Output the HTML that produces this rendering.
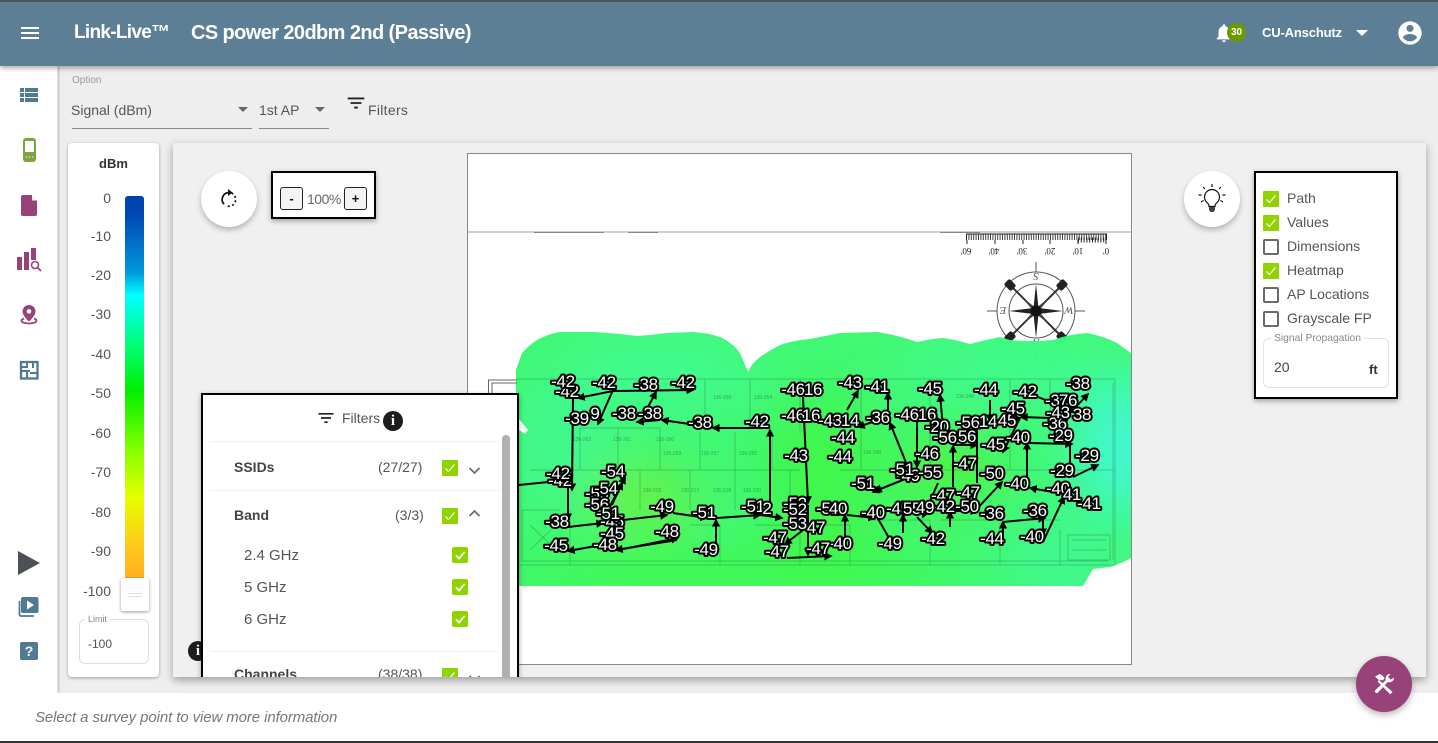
<!DOCTYPE html>
<html lang="en"><head><meta charset="utf-8"><title>Link-Live</title>
<style>
*{box-sizing:border-box}
html,body{margin:0;padding:0;width:1438px;height:743px;overflow:hidden;background:#eee;font-family:"Liberation Sans",sans-serif;color:#555}
.a{position:absolute}
#hdr{left:0;top:0;width:1438px;height:66px;background:#5d7f96;border-top:2px solid #4a5560;box-shadow:0 2px 5px rgba(0,0,0,.35);z-index:5;color:#fff}
#side{left:0;top:66px;width:58px;height:627px;background:#fff;border-right:1px solid #ddd;box-shadow:1px 0 2px rgba(0,0,0,.2)}
#bot{left:0;top:693px;width:1438px;height:50px;background:#fff;border-bottom:2px solid #3a3430;z-index:3}
#bot span{position:absolute;left:35px;top:16px;font-style:italic;font-size:15px;line-height:18px;letter-spacing:-.1px;color:#777}
#main{left:173px;top:143px;width:1253px;height:534px;background:#f0f0f0;box-shadow:0 3px 8px rgba(0,0,0,.35);overflow:hidden;z-index:1}
#leg{left:68px;top:143px;width:91px;height:534px;background:#fff;border-radius:4px;box-shadow:0 1px 3px rgba(0,0,0,.35)}
.n{position:absolute;right:48px;font-size:14px;line-height:16px;color:#555;width:40px;text-align:right}
.ck{position:absolute;width:16px;height:16px;background:#8fd400;border-radius:1px}
.ck svg{position:absolute;left:0;top:0}
.un{position:absolute;width:16px;height:16px;border:2px solid #6a6a6a;border-radius:2px;background:#fff}
.lb{position:absolute;font-size:14px;line-height:16px;color:#555;white-space:nowrap}
.b{font-weight:bold;color:#444}
.cir{position:absolute;width:56px;height:56px;border-radius:50%;background:#fff;box-shadow:0 3px 6px rgba(0,0,0,.25)}
.box{position:absolute;background:#fff;border:2px solid #000;box-shadow:0 2px 5px rgba(0,0,0,.35)}
.btn{position:absolute;width:23px;height:23px;border:1px solid #222;border-radius:3px;background:#f4f4f4;text-align:center;font-size:13px;line-height:21px;font-weight:bold;color:#111}
.sep{position:absolute;left:7px;width:290px;height:1px;background:#f0f0f0}
.inf{position:absolute;width:20px;height:20px;border-radius:50%;background:#1c1c1c;color:#fff;text-align:center;font:bold 15px/20px "Liberation Serif",serif}
</style></head><body>

<div class="a" id="hdr">
 <svg class="a" style="left:18px;top:19px" width="24" height="24" viewBox="0 0 24 24"><path fill="#fff" d="M3 18h18v-2H3v2zm0-5h18v-2H3v2zm0-7v2h18V6H3z"/></svg>
 <div class="a" style="left:74px;top:19px;font-size:19px;line-height:24px;font-weight:bold;letter-spacing:-.7px;white-space:nowrap">Link-Live™</div>
 <div class="a" style="left:191px;top:19px;font-size:20px;line-height:24px;font-weight:bold;letter-spacing:-.6px;white-space:nowrap">CS power 20dbm 2nd (Passive)</div>
 <svg class="a" style="left:1213px;top:20px" width="22" height="22" viewBox="0 0 24 24"><path fill="#fff" d="M12 22c1.1 0 2-.9 2-2h-4c0 1.1.89 2 2 2zm6-6v-5c0-3.07-1.64-5.64-4.5-6.32V4c0-.83-.67-1.5-1.5-1.5s-1.5.67-1.5 1.5v.68C7.63 5.36 6 7.92 6 11v5l-2 2v1h16v-1l-2-2z"/></svg>
 <div class="a" style="left:1227px;top:21px;width:19px;height:19px;border-radius:50%;background:#6a9a00;color:#fff;font:bold 10px/19px 'Liberation Sans',sans-serif;text-align:center">30</div>
 <div class="a" style="left:1262px;top:23px;font-size:13px;line-height:16px;font-weight:bold;letter-spacing:-.15px;white-space:nowrap">CU-Anschutz</div>
 <svg class="a" style="left:1356px;top:28px" width="12" height="7"><path fill="#fff" d="M0 0h12L6 6z"/></svg>
 <svg class="a" style="left:1396px;top:17px" width="28" height="28" viewBox="0 0 24 24"><path fill="#fff" d="M12 2C6.48 2 2 6.48 2 12s4.48 10 10 10 10-4.48 10-10S17.52 2 12 2zm0 3c1.66 0 3 1.34 3 3s-1.34 3-3 3-3-1.34-3-3 1.34-3 3-3zm0 14.2c-2.5 0-4.71-1.28-6-3.22.03-1.99 4-3.08 6-3.08 1.99 0 5.97 1.09 6 3.08-1.29 1.94-3.5 3.22-6 3.22z"/></svg>
</div>

<div class="a" id="side">
 <svg class="a" style="left:0;top:0" width="58" height="627" viewBox="0 66 58 627">
  <g fill="#4f7a94">
   <path d="M20 88h4v4h-4zM25 88H38v4H25zM20 93h4v4h-4zM25 93H38v4H25zM20 98h4v4h-4zM25 98H38v4H25z"/>
  </g>
  <rect x="23" y="138" width="13" height="24" rx="3" fill="#7aa63f"/>
  <rect x="25" y="141" width="9" height="11" fill="#fff"/>
  <g fill="#d9e6c5"><circle cx="26.500" cy="157" r=".8"/><circle cx="29.500" cy="157" r=".8"/><circle cx="32.500" cy="157" r=".8"/></g>
  <path fill="#97437a" d="M23 195h8.500l5.500 6v13a2 2 0 0 1-2 2H23a2 2 0 0 1-2-2v-17a2 2 0 0 1 2-2z"/>
  <path fill="#fff" d="M32 195.500v5h5z" opacity=".9"/>
  <g fill="#97437a"><rect x="17" y="257" width="5" height="13"/><rect x="24" y="252" width="5" height="18"/><rect x="31" y="248" width="5" height="12"/></g>
  <circle cx="35" cy="265" r="3.500" fill="#fff" stroke="#97437a" stroke-width="1.600"/><path d="M37.500 267.500l3.500 3.500" stroke="#97437a" stroke-width="1.800"/>
  <path fill="#97437a" d="M29 305c-3.600 0-6.500 2.900-6.500 6.500 0 4.400 6.500 10 6.500 10s6.500-5.600 6.500-10c0-3.600-2.900-6.500-6.500-6.500zm0 8.700a2.300 2.300 0 1 1 0-4.600 2.300 2.300 0 0 1 0 4.600z"/>
  <path fill="none" stroke="#97437a" stroke-width="1.800" d="M24 318.500c-2 .7-2.500 1.500-2.500 2.300 0 1.500 3.300 2.700 7.500 2.700s7.500-1.200 7.500-2.700c0-.8-.5-1.600-2.500-2.300"/>
  <rect x="21" y="362" width="16.500" height="16.500" fill="none" stroke="#4f7a94" stroke-width="2.300"/>
  <path fill="none" stroke="#4f7a94" stroke-width="2" d="M27 362v5h-5M27 371v7M22 371h8M33 362v6M30 373h8"/>
  <path fill="#4d5157" d="M18 551v24l22-12z"/>
  <path fill="#4f7a94" d="M23 597h13.500a2 2 0 0 1 2 2v12a2 2 0 0 1-2 2H23a2 2 0 0 1-2-2v-12a2 2 0 0 1 2-2z"/>
  <path fill="#fff" d="M27 600.500v9l7-4.500z"/>
  <path fill="none" stroke="#4f7a94" stroke-width="1.800" d="M19.500 601v13.500a1.500 1.500 0 0 0 1.500 1.500h13"/>
  <rect x="20" y="642" width="18" height="18" rx="2" fill="#4f7a94"/>
  <text x="29" y="656" text-anchor="middle" font-family="Liberation Sans" font-weight="bold" font-size="14" fill="#fff">?</text>
 </svg>
</div>

<div class="a" style="left:72px;top:75px;font-size:10px;line-height:12px;color:#999">Option</div>
<div class="lb" style="left:71px;top:102px">Signal (dBm)</div>
<div class="a" style="left:72px;top:128px;width:180px;height:1px;background:#888"></div>
<svg class="a" style="left:238px;top:107px" width="10" height="6"><path fill="#666" d="M0 0h10L5 5z"/></svg>
<div class="lb" style="left:259px;top:102px">1st AP</div>
<div class="a" style="left:259px;top:128px;width:70px;height:1px;background:#888"></div>
<svg class="a" style="left:315px;top:107px" width="10" height="6"><path fill="#666" d="M0 0h10L5 5z"/></svg>
<svg class="a" style="left:345px;top:92px" width="22" height="22" viewBox="0 0 24 24"><path fill="#222" d="M10 18h4v-2h-4v2zM3 6v2h18V6H3zm3 7h12v-2H6v2z"/></svg>
<div class="lb" style="left:368px;top:102px;letter-spacing:.3px">Filters</div>

<div class="a" id="leg">
 <div class="a b" style="left:31px;top:13px;font-size:13px;line-height:16px;color:#333">dBm</div>
 <div class="n" style="top:47px">0</div><div class="n" style="top:85px">-10</div><div class="n" style="top:124px">-20</div><div class="n" style="top:163px">-30</div><div class="n" style="top:203px">-40</div><div class="n" style="top:242px">-50</div><div class="n" style="top:282px">-60</div><div class="n" style="top:321px">-70</div><div class="n" style="top:361px">-80</div><div class="n" style="top:400px">-90</div><div class="n" style="top:440px">-100</div>
 <div class="a" style="left:57px;top:53px;width:19px;height:382px;border-radius:3px 3px 0 0;background:linear-gradient(#0040b0 0,#0048b4 5%,#0098dc 20%,#00ffff 26%,#00ff80 38%,#00f000 51%,#80ff00 66%,#e6ff00 79%,#ffc81e 92%,#ffb020 100%)"></div>
 <div class="a" style="left:53px;top:435px;width:28px;height:33px;background:#fff;border-radius:2px;box-shadow:0 1px 3px rgba(0,0,0,.4)"><div class="a" style="left:7px;top:15px;width:14px;height:4px;border-top:1px solid #ddd;border-bottom:1px solid #ddd"></div></div>
 <div class="a" style="left:11px;top:476px;width:70px;height:45px;border:1px solid #ddd;border-radius:6px"></div>
 <div class="a" style="left:17px;top:471px;padding:0 3px;background:#fff;font-size:9px;line-height:11px;color:#888">Limit</div>
 <div class="a" style="left:20px;top:494px;font-size:12px;line-height:14px;color:#555">-100</div>
</div>

<div class="a" id="main">
 <div class="cir" style="left:28px;top:28px">
  <svg class="a" style="left:16px;top:16px" width="24" height="24" viewBox="0 0 24 24"><path fill="none" stroke="#111" stroke-width="1.700" d="M12 5.500a7 7 0 0 0-5 11.700"/><path fill="#111" d="M11 2l4.500 3.500L11 9z"/><path fill="none" stroke="#111" stroke-width="1.700" stroke-dasharray="2 2.400" d="M14.500 6a7 7 0 0 1 1 12.200 7 7 0 0 1-7 .2"/></svg>
 </div>
 <div class="box" style="left:98px;top:28px;width:105px;height:48px">
  <div class="btn" style="left:7px;top:14px">-</div>
  <div class="a" style="left:34px;top:18px;font-size:14px;line-height:16px;letter-spacing:-.5px;color:#666">100%</div>
  <div class="btn" style="left:71px;top:14px">+</div>
 </div>
 <div class="cir" style="left:1011px;top:28px">
  <svg class="a" style="left:13px;top:12px" width="30" height="32" viewBox="0 0 30 32"><g fill="none" stroke="#111" stroke-width="1.200"><path d="M15 6.500a7.500 7.500 0 0 0-4.500 13.500c1 1 1.500 2 1.500 3.500h6c0-1.500.5-2.500 1.500-3.500A7.500 7.500 0 0 0 15 6.500z"/><path d="M15 1v3M6 4l2 2M24 4l-2 2M1.500 12h3M25.500 12h3M4 19l2.500-1.500M26 19l-2.500-1.500"/></g><path fill="#444" d="M12 24h6v3l-1.500 2h-3L12 27z"/></svg>
 </div>
 <div class="inf" style="left:15px;top:498px">i</div>
</div>

<!-- floor plan -->
<svg class="a" style="left:467px;top:153px;z-index:2" width="665" height="512" viewBox="467 153 665 512">
 <defs>
  <clipPath id="hc"><path d="M516 586V370L522 353Q528 346 537 340Q548 334 560 332L593 332Q615 333 637 336Q652 335 667 333L693 332Q708 333 720 337Q733 343 740 353L748 372Q752 363 760 357Q770 350 780 345Q795 340 810 339Q825 336 840 333L877 332Q897 335 917 342Q930 339 943 338Q957 340 970 344Q985 340 1000 337L1010 340Q1030 342 1053 340Q1070 334 1087 333Q1103 336 1117 343L1131 353V558Q1120 564 1110 567L1093 569L1083 586Z"/></clipPath>
  <filter id="bl" x="-40%" y="-40%" width="180%" height="180%"><feGaussianBlur stdDeviation="26"/></filter>
  <marker id="ah" viewBox="0 0 10 10" refX="8" refY="5" markerWidth="4.200" markerHeight="4.200" orient="auto"><path d="M0 0L10 5L0 10z" fill="#000"/></marker>
 </defs>
 <rect x="467.500" y="153.500" width="664" height="511" fill="#fff" stroke="#888"/>
 <rect x="468" y="231" width="663" height="2" fill="#d0d0d0"/>
 <path d="M534 232.500h70M628 232.500h30M940 232.500h40" stroke="#333" stroke-width="1" opacity=".45"/>
 <!-- ruler -->
 <g stroke="#222" fill="none">
  <path d="M966.500 240v-6h140v6" stroke-width="1"/>
  <path d="M966 237h140" stroke-width="6" stroke-dasharray="1 1.400" opacity=".85"/>
  <path d="M1078 240h28" stroke-width="5" stroke-dasharray="1 1.800"/>
  <path d="M995 240v4M1023 240v4M1050 240v4M1078 240v4M1106 240v4M967 240v4" stroke-width="1"/>
 </g>
 <g font-family="Liberation Serif" font-size="9" fill="#222" text-anchor="middle">
  <text transform="translate(966 248) rotate(180)">60'</text><text transform="translate(994 248) rotate(180)">40'</text><text transform="translate(1022 248) rotate(180)">30'</text><text transform="translate(1050 248) rotate(180)">20'</text><text transform="translate(1078 248) rotate(180)">10'</text><text transform="translate(1106 248) rotate(180)">0'</text>
 </g>
 <!-- compass -->
 <g transform="translate(1036 311)">
  <g fill="none" stroke="#555" stroke-width="1"><circle r="39"/><circle r="27"/><path d="M-49 0H-39M39 0H49M0-49V-39M0 39V49"/></g>
  <g stroke="#333" stroke-width="2"><path d="M-26-26L26 26M26-26L-26 26"/></g>
  <path fill="#222" d="M0-27L2.500-3 27 0 2.500 3 0 27-2.500 3-27 0-2.500-3z"/>
  <path fill="#444" d="M-13-13L0-3-3 0zM13-13L3 0 0-3zM-13 13L-3 0 0 3zM13 13L0 3 3 0z"/>
  <g fill="#222"><rect x="-4" y="-5" width="8" height="10" rx="2" transform="translate(-26 -26) rotate(-45)"/><rect x="-4" y="-5" width="8" height="10" rx="2" transform="translate(26 -26) rotate(45)"/><rect x="-4" y="-5" width="8" height="10" rx="2" transform="translate(-26 26) rotate(45)"/><rect x="-4" y="-5" width="8" height="10" rx="2" transform="translate(26 26) rotate(-45)"/></g>
  <circle r="5.500" fill="#111"/>
  <g font-family="Liberation Serif" font-style="italic" font-size="11" fill="#555" text-anchor="middle">
   <text transform="translate(0 -38) rotate(180)">S</text><text transform="translate(0 28) rotate(180)">N</text><text transform="translate(-33 -4) rotate(180)">E</text><text transform="translate(33 -4) rotate(180)">W</text>
  </g>
 </g>
 <!-- heatmap -->
 <g clip-path="url(#hc)" opacity=".98">
  <rect x="510" y="325" width="625" height="265" fill="#3ef872"/>
  <g filter="url(#bl)">
   <ellipse cx="660" cy="372" rx="100" ry="36" fill="#3cfb8e"/>
   <ellipse cx="1010" cy="372" rx="110" ry="36" fill="#3cfb8a"/>
   <ellipse cx="1125" cy="450" rx="50" ry="70" fill="#3cf8d0"/>
   <ellipse cx="640" cy="498" rx="60" ry="26" fill="#6cf038"/>
   <ellipse cx="825" cy="480" rx="60" ry="90" fill="#3cf64a"/>
   <ellipse cx="950" cy="470" rx="50" ry="40" fill="#48f442"/>
   <ellipse cx="740" cy="575" rx="230" ry="20" fill="#3cf840"/>
   <ellipse cx="560" cy="440" rx="50" ry="60" fill="#3cf88c"/>
   <ellipse cx="1060" cy="560" rx="50" ry="30" fill="#3cf898"/>
  </g>
 </g>
 <!-- plan -->
 <path d="M517 380H488.500V394M517 383H492V394" fill="none" stroke="#666"/>
 <g fill="none" stroke="#1c6b3c" stroke-width="1" opacity=".33">
  <path d="M517 379H1115V565H517M1113 383V560M521 561H1108"/>
  <path d="M705 379V428M750 379V428M800 379V430M861 379V470H930V379M1010 379V470M1050 379V440"/>
  <path d="M580 428H660M580 428V470M618 428V470M660 428V470M700 432V470M735 432V470M772 432V470M530 470H800M840 470H1115M570 510V565M640 470V510M690 470V510M735 470V510M790 470V510"/>
  <path d="M690 525H720V565M755 525H800V565M810 525H850V565M870 520H930V565M940 520H1000V565M1020 520H1060"/>
  <path d="M1060 530V565M1068 535H1110V560H1068ZM1072 540H1106M1072 550H1106"/>
  <path d="M522 510H560M522 510V560M530 525L556 550M556 525L530 550"/>
 </g>
 <g font-family="Liberation Sans" font-size="5" fill="#1c6b3c" opacity=".55" text-anchor="middle">
  <text x="722" y="399">136-258</text><text x="763" y="399">136-254</text><text x="582" y="441">136-262</text><text x="622" y="441">136-261</text><text x="665" y="441">136-260</text><text x="672" y="455">136-259</text><text x="710" y="455">136-257</text><text x="748" y="455">136-255</text><text x="652" y="492">136-216</text><text x="690" y="492">136-217</text><text x="722" y="492">136-218</text><text x="752" y="492">136-220</text><text x="872" y="454">136-248</text><text x="965" y="398">136-240</text>
 </g>
 <!-- arrows -->
 <g fill="none" stroke="#000" stroke-width="2" marker-end="url(#ah)">
  <path d="M613 390L598 424"/><path d="M613 391L578 398"/><path d="M613 391L693 390"/><path d="M573 397L572 490"/><path d="M568 483V520"/><path d="M519 485L568 480"/><path d="M568 527L603 523"/><path d="M623 520L667 515"/><path d="M673 513L707 518"/><path d="M717 518L760 515"/><path d="M760 515L782 518"/><path d="M770 510V430"/><path d="M767 428L713 428"/><path d="M710 427L662 420"/><path d="M660 420L637 422"/><path d="M648 407L656 392"/><path d="M607 544L568 551"/><path d="M618 550L678 538"/><path d="M677 540L616 550"/><path d="M716 547V520"/><path d="M608 510L625 477"/><path d="M612 505L622 483"/>
  <path d="M803 397L808 503"/><path d="M847 410L858 391"/><path d="M890 416L858 427"/><path d="M907 465L890 423"/><path d="M888 410V393"/><path d="M917 420V467"/><path d="M943 427L940 395"/><path d="M917 421H943"/><path d="M903 480L873 492"/><path d="M918 474L875 491"/><path d="M938 483L923 517"/><path d="M917 517L932 533"/><path d="M953 487V446"/><path d="M977 483V423"/><path d="M953 445H977"/><path d="M977 423L1020 418"/><path d="M1020 418L1003 452"/><path d="M1050 418L1021 417"/><path d="M1033 395L1075 412"/><path d="M1073 410L1088 394"/><path d="M1028 443L1072 444"/><path d="M1027 477V443"/><path d="M1070 443V475"/><path d="M1073 477L1098 465"/><path d="M1070 495L1030 488"/><path d="M1043 542L1064 497"/><path d="M1043 518V535"/><path d="M1003 522L1045 518"/><path d="M1003 533V522"/><path d="M973 513L1002 482"/><path d="M950 527V512"/><path d="M953 511H977"/><path d="M903 533V515"/><path d="M847 515L875 518"/><path d="M845 537V515"/><path d="M787 558L831 556"/><path d="M807 527L785 544"/><path d="M808 505V555"/><path d="M877 517L893 545"/><path d="M990 400V421"/>
 </g>
 <!-- values -->
 <g font-family="Liberation Sans" font-size="17" fill="#fff" stroke="#000" stroke-width="4" stroke-linejoin="round" paint-order="stroke" text-anchor="middle" letter-spacing="-.3">
  <text x="567" y="397">-42</text><text x="563" y="387">-42</text><text x="604" y="388">-42</text><text x="646" y="390">-38</text><text x="683" y="388">-42</text><text x="793" y="395">-46</text><text x="813" y="395">16</text>
  <text x="595" y="419">9</text><text x="577" y="424">-39</text><text x="624" y="419">-38</text><text x="650" y="419">-38</text><text x="700" y="428">-38</text><text x="757" y="427">-42</text><text x="793" y="421">-46</text><text x="811" y="421">16</text><text x="796" y="461">-43</text>
  <text x="560" y="486">-42</text><text x="558" y="479">-42</text><text x="613" y="477">-54</text><text x="597" y="499">-59</text><text x="606" y="494">-54</text><text x="597" y="510">-56</text><text x="612" y="527">-45</text><text x="608" y="519">-51</text><text x="612" y="539">-45</text><text x="605" y="550">-48</text><text x="557" y="527">-38</text><text x="556" y="551">-45</text><text x="662" y="512">-49</text><text x="667" y="537">-48</text><text x="704" y="518">-51</text><text x="706" y="555">-49</text><text x="753" y="512">-51</text><text x="767" y="514">2</text><text x="795" y="509">-52</text><text x="795" y="515">-52</text><text x="795" y="529">-53</text><text x="816" y="533">47</text><text x="775" y="543">-47</text><text x="777" y="557">-47</text>
  <text x="850" y="388">-43</text><text x="877" y="392">-41</text><text x="878" y="423">-36</text><text x="930" y="394">-45</text><text x="986" y="395">-44</text><text x="1025" y="397">-42</text><text x="1078" y="389">-38</text><text x="1057" y="406">-37</text><text x="1068" y="406">76</text><text x="1055" y="429">-36</text><text x="1058" y="418">-43</text><text x="1082" y="420">38</text>
  <text x="907" y="420">-46</text><text x="927" y="420">16</text><text x="830" y="426">-43</text><text x="850" y="426">14</text><text x="843" y="443">-44</text><text x="840" y="462">-44</text><text x="937" y="432">-20</text><text x="945" y="443">-56</text><text x="967" y="442">56</text><text x="968" y="428">-56</text><text x="988" y="427">14</text><text x="1007" y="426">45</text><text x="1013" y="414">-45</text><text x="1018" y="443">-40</text><text x="993" y="450">-45</text><text x="1061" y="441">-29</text><text x="1087" y="461">-29</text><text x="1062" y="476">-29</text>
  <text x="927" y="459">-46</text><text x="965" y="469">-47</text><text x="992" y="479">-50</text><text x="908" y="481">-49</text><text x="902" y="475">-51</text><text x="930" y="478">-55</text><text x="863" y="489">-51</text><text x="1017" y="489">-40</text><text x="1058" y="494">-40</text><text x="1072" y="500">41</text><text x="1089" y="509">-41</text><text x="943" y="501">-47</text><text x="968" y="498">-47</text><text x="943" y="512">-42</text><text x="967" y="512">-50</text><text x="992" y="519">-36</text><text x="1035" y="516">-36</text>
  <text x="828" y="514">-51</text><text x="838" y="514">40</text><text x="873" y="518">-40</text><text x="898" y="514">-45</text><text x="912" y="514">55</text><text x="925" y="513">49</text><text x="890" y="549">-49</text><text x="933" y="544">-42</text><text x="992" y="544">-44</text><text x="1032" y="542">-40</text><text x="840" y="549">-40</text><text x="818" y="554">-47</text>
 </g>
 <path d="M519 419L528 430L525 434L519 430Z" fill="#fff"/>
</svg>

<!-- filters panel -->
<div class="a" style="left:0;top:0;width:1438px;height:677px;overflow:hidden;z-index:3;pointer-events:none">
 <div class="box" style="left:201px;top:393px;width:318px;height:300px">
  <svg class="a" style="left:112.500px;top:13px" width="20" height="20" viewBox="0 0 24 24"><path fill="#222" d="M10 18h4v-2h-4v2zM3 6v2h18V6H3zm3 7h12v-2H6v2z"/></svg>
  <div class="lb" style="left:139px;top:15px">Filters</div>
  <div class="inf" style="left:180px;top:16px">i</div>
  <div class="sep" style="top:46px"></div>
  <div class="a" style="left:299px;top:40px;width:8px;height:260px;background:#b0b0b0;border-radius:4px 4px 0 0"></div>

  <div class="lb b" style="left:31px;top:64px">SSIDs</div>
  <div class="lb" style="left:175px;top:64px">(27/27)</div>
  <div class="ck" style="left:239px;top:65px"><svg width="16" height="16"><path d="M3.500 8.500l3 3 6-7" fill="none" stroke="#fff" stroke-width="1.200"/></svg></div>
  <svg class="a" style="left:265px;top:72px" width="13" height="8"><path d="M1.500 1l5 5 5-5" fill="none" stroke="#666" stroke-width="1.600"/></svg>
  <div class="sep" style="top:95px"></div>

  <div class="lb b" style="left:31px;top:112px">Band</div>
  <div class="lb" style="left:192px;top:112px">(3/3)</div>
  <div class="ck" style="left:239px;top:113px"><svg width="16" height="16"><path d="M3.500 8.500l3 3 6-7" fill="none" stroke="#fff" stroke-width="1.200"/></svg></div>
  <svg class="a" style="left:265px;top:114px" width="13" height="8"><path d="M1.500 7l5-5 5 5" fill="none" stroke="#666" stroke-width="1.600"/></svg>

  <div class="lb" style="left:41px;top:153px;font-size:15px">2.4 GHz</div>
  <div class="ck" style="left:249px;top:152px;border-radius:2px"><svg width="16" height="16"><path d="M4 8.500l3 3 5.500-6.500" fill="none" stroke="#fff" stroke-width="1.800"/></svg></div>
  <div class="lb" style="left:41px;top:185px;font-size:15px">5 GHz</div>
  <div class="ck" style="left:249px;top:184px;border-radius:2px"><svg width="16" height="16"><path d="M4 8.500l3 3 5.500-6.500" fill="none" stroke="#fff" stroke-width="1.800"/></svg></div>
  <div class="lb" style="left:41px;top:217px;font-size:15px">6 GHz</div>
  <div class="ck" style="left:249px;top:216px;border-radius:2px"><svg width="16" height="16"><path d="M4 8.500l3 3 5.500-6.500" fill="none" stroke="#fff" stroke-width="1.800"/></svg></div>
  <div class="sep" style="top:256px"></div>

  <div class="lb b" style="left:31px;top:271px">Channels</div>
  <div class="lb" style="left:175px;top:271px">(38/38)</div>
  <div class="ck" style="left:239px;top:273px"><svg width="16" height="16"><path d="M3.500 8.500l3 3 6-7" fill="none" stroke="#fff" stroke-width="1.200"/></svg></div>
  <svg class="a" style="left:265px;top:280px" width="13" height="8"><path d="M1.500 1l5 5 5-5" fill="none" stroke="#666" stroke-width="1.600"/></svg>
 </div>

 <!-- display options -->
 <div class="box" style="left:1254px;top:171px;width:144px;height:228px">
  <div class="ck" style="left:7px;top:18px"><svg width="16" height="16"><path d="M3.500 8.500l3 3 6-7" fill="none" stroke="#fff" stroke-width="1.200"/></svg></div>
  <div class="lb" style="left:31px;top:17px">Path</div>
  <div class="ck" style="left:7px;top:42px"><svg width="16" height="16"><path d="M3.500 8.500l3 3 6-7" fill="none" stroke="#fff" stroke-width="1.200"/></svg></div>
  <div class="lb" style="left:31px;top:41px">Values</div>
  <div class="un" style="left:7px;top:66px"></div>
  <div class="lb" style="left:31px;top:65px">Dimensions</div>
  <div class="ck" style="left:7px;top:90px"><svg width="16" height="16"><path d="M3.500 8.500l3 3 6-7" fill="none" stroke="#fff" stroke-width="1.200"/></svg></div>
  <div class="lb" style="left:31px;top:89px">Heatmap</div>
  <div class="un" style="left:7px;top:114px"></div>
  <div class="lb" style="left:31px;top:113px">AP Locations</div>
  <div class="un" style="left:7px;top:138px"></div>
  <div class="lb" style="left:31px;top:137px">Grayscale FP</div>
  <div class="a" style="left:7px;top:165px;width:126px;height:50px;border:1px solid #e2e2e2;border-radius:6px"></div>
  <div class="a" style="left:15px;top:160px;padding:0 3px;background:#fff;font-size:10.300px;line-height:12px;color:#888;white-space:nowrap">Signal Propagation</div>
  <div class="lb" style="left:18px;top:186px;color:#444">20</div>
  <div class="lb b" style="left:113px;top:189px;font-size:13px;color:#333">ft</div>
 </div>
</div>

<div class="a" id="bot"><span>Select a survey point to view more information</span></div>

<div class="a" style="left:1356px;top:656px;width:56px;height:56px;border-radius:50%;background:#97437a;box-shadow:0 3px 7px rgba(0,0,0,.28);z-index:4">
 <svg class="a" style="left:16px;top:16px" width="24" height="24" viewBox="0 0 24 24"><g fill="#fff"><path d="M3 4.500l5-2.500 3 2 1.500 2.500-2 2-2-1-1 1L5 6.500z"/><path d="M7 8l13.500 12-2.300 2.300L5.500 9.500z"/><path d="M22 5.500a4.700 4.700 0 0 1-6.300 4.500L6 20.500a1.700 1.700 0 0 1-2.500-2.500L13.800 8.300A4.700 4.700 0 0 1 18.500 2l-2.500 2.800 2.800 2.800z"/></g></svg>
</div>
</body></html>
